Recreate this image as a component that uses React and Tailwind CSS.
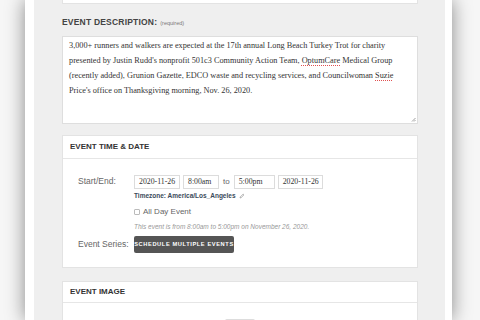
import React from 'react';

const serif = { fontFamily: '"Liberation Serif", "DejaVu Serif", serif' };

function Field({ children, className = '' }) {
  return (
    <span className={`inline-flex items-center h-[14px] px-[4px] border border-[#dcdcdc] bg-white text-[7.8px] whitespace-nowrap text-[#333] ${className}`} style={serif}>
      {children}
    </span>
  );
}

function Spell({ children }) {
  return <span className="underline decoration-dotted decoration-[#e05050] underline-offset-2">{children}</span>;
}

export default function App() {
  return (
    <div className="w-[480px] h-[320px] overflow-hidden bg-[#f6f6f6] font-['Liberation_Sans',Arial,sans-serif]">
      <div className="ml-[25px] w-[427px] h-[320px] bg-white pl-[9px] pr-[7px] shadow-[0_0_18px_rgba(0,0,0,0.45)]">
        <div className="h-full bg-[#efefef] pl-[28px] pr-[27px]">
          {/* tail of previous card */}
          <div className="h-[4px] bg-white border border-t-0 border-[#e3e3e3]" />

          <div className="mt-[12px] flex items-baseline gap-[3px]">
            <span className="text-[8.5px] font-bold tracking-[0.2px] text-[#444]">EVENT DESCRIPTION:</span>
            <span className="text-[5.5px] text-[#777]">(required)</span>
          </div>

          <div className="relative mt-[7px] h-[88px] bg-white border border-[#dedede] px-[6px] pt-[1px] text-[8.25px] leading-[15px] text-[#333] whitespace-nowrap" style={serif}>
            <div>3,000+ runners and walkers are expected at the 17th annual Long Beach Turkey Trot for charity</div>
            <div>presented by Justin Rudd's nonprofit 501c3 Community Action Team, <Spell>OptumCare</Spell> Medical Group</div>
            <div>(recently added), Grunion Gazette, EDCO waste and recycling services, and Councilwoman <Spell>Suzie</Spell></div>
            <div>Price's office on Thanksgiving morning, Nov. 26, 2020.</div>
            <svg className="absolute right-[1px] bottom-[1px]" width="5" height="5" viewBox="0 0 5 5">
              <path d="M1 4.5 L4.5 1 M3 4.5 L4.5 3" stroke="#888" strokeWidth="0.8" />
            </svg>
          </div>

          {/* time & date card */}
          <div className="mt-[11px] bg-white border border-[#e3e3e3]">
            <div className="h-[23px] flex items-center pl-[7px] border-b border-[#e6e6e6] text-[8px] font-bold text-[#333]">
              EVENT TIME &amp; DATE
            </div>
            <div className="pt-[16px] pb-[14px]">
              <div className="flex items-center">
                <span className="w-[71px] pl-[15px] text-[8.5px] text-[#666]">Start/End:</span>
                <div className="flex items-center gap-[3px]">
                  <Field className="w-[46px]">2020-11-26</Field>
                  <Field className="w-[36px]">8:00am</Field>
                  <span className="text-[8px] text-[#666] mx-[1px]">to</span>
                  <Field className="w-[41px]">5:00pm</Field>
                  <Field className="w-[45px]">2020-11-26</Field>
                </div>
              </div>
              <div className="ml-[71px] mt-[2px] flex items-center gap-[3px] text-[6.5px] font-bold text-[#3a4a5a]">
                Timezone: America/Los_Angeles
                <svg width="6" height="6" viewBox="0 0 6 6">
                  <path d="M1 5 L1.3 3.9 L4.2 1 L5 1.8 L2.1 4.7 Z" fill="none" stroke="#888" strokeWidth="0.6" />
                </svg>
              </div>
              <div className="ml-[71px] mt-[5px] flex items-center gap-[3px] text-[8px] text-[#666]">
                <span className="w-[6px] h-[6px] border border-[#bbb] rounded-[1px] bg-white" />
                All Day Event
              </div>
              <div className="ml-[71px] mt-[4px] text-[6.5px] italic text-[#999]">
                This event is from 8:00am to 5:00pm on November 26, 2020.
              </div>
              <div className="mt-[5px] flex items-center">
                <span className="w-[71px] pl-[15px] text-[8.5px] text-[#666]">Event Series:</span>
                <span className="h-[17px] w-[100px] flex items-center justify-center rounded-[2px] bg-[#555] text-[5.7px] font-bold tracking-[0.6px] text-white">
                  SCHEDULE MULTIPLE EVENTS
                </span>
              </div>
            </div>
          </div>

          {/* event image card */}
          <div className="mt-[13px] bg-white border border-[#e3e3e3] h-[60px]">
            <div className="h-[21px] flex items-center pl-[7px] border-b border-[#e6e6e6] text-[8px] font-bold text-[#333]">
              EVENT IMAGE
            </div>
            <div className="flex justify-center pt-[16px]">
              <span className="w-[30px] h-[4px] rounded-t-[2px] bg-[#ddd]" />
            </div>
          </div>
        </div>
      </div>
    </div>
  );
}
